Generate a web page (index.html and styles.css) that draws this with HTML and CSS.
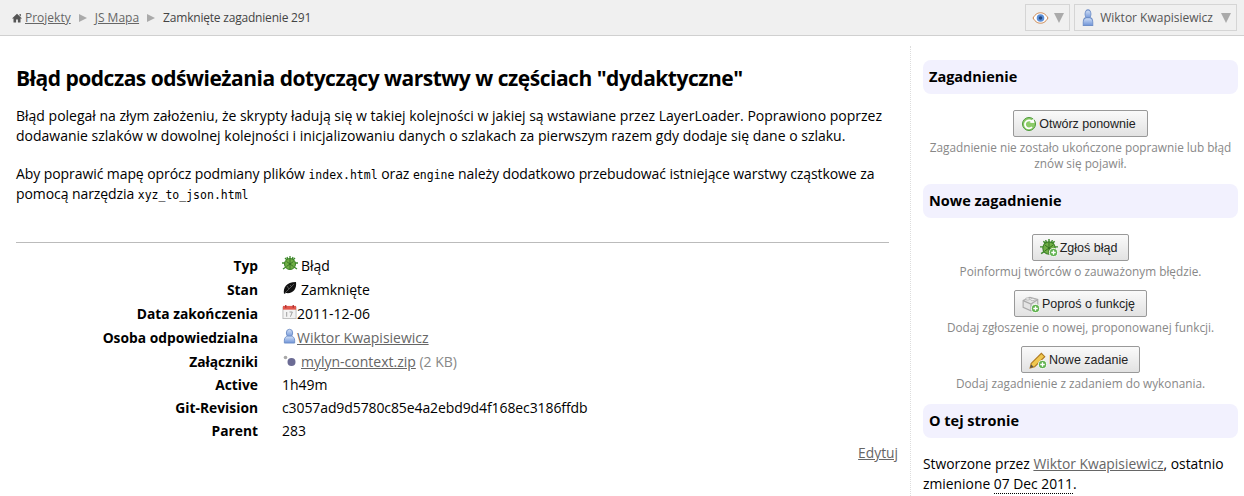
FILE: index.html
```html
<!DOCTYPE html>
<html lang="pl">
<head>
  <meta charset="UTF-8" />
  <title>Zamknięte zagadnienie 291</title>
  <link rel="stylesheet" href="styles.css">
</head>
<body>

  <svg class="defs" width="0" height="0" aria-hidden="true">
    <defs>
      <linearGradient id="userFill" x1="0" y1="0" x2="0" y2="1">
        <stop offset="0" stop-color="#d5e3f8"/>
        <stop offset="1" stop-color="#6f94d8"/>
      </linearGradient>
      <g id="userIcon">
        <ellipse cx="8" cy="4.800" rx="3.400" ry="4" fill="url(#userFill)" stroke="#6f8fc8"/>
        <path d="M2.500 15.500v-3c0-2.800 2-4.200 3.500-4.400h4c1.500.2 3.500 1.600 3.500 4.400v3z" fill="url(#userFill)" stroke="#6f8fc8"/>
      </g>
      <g id="bugIcon">
        <path d="M3 2l3 3M13 2l-3 3M0 7h3M16 7h-3M1 13l3-2M15 13l-3-2M8 0v3M5 1l1 3M11 1l-1 3" stroke="#3d8a2c" stroke-width="1.300" fill="none"/>
        <ellipse cx="8" cy="8" rx="5.500" ry="5.500" fill="#6fae45" stroke="#3c7f28"/>
        <path d="M4.500 5.500l7 5M11.500 5.500l-7 5M8 3v10" stroke="#2f6b20" stroke-width=".8"/>
      </g>
      <g id="plusBadge">
        <circle cx="12" cy="12" r="3.600" fill="#5cb04a" stroke="#fff" stroke-width=".8"/>
        <path d="M10 12h4M12 10v4" stroke="#fff" stroke-width="1.200"/>
      </g>
    </defs>
  </svg>

  <header class="topbar">
    <nav class="crumbs">
      <svg class="home-icon" width="10" height="10" viewBox="0 0 10 10"><path d="M5 .8L0 5.400h1.500V9.500h2.600V6.500h1.800v3h2.600V5.400H10z" fill="#555"/><path d="M7.500 1h1.300v2.500L7.500 2.500z" fill="#555"/></svg>
      <a href="#">Projekty</a>
      <span class="arrow"></span>
      <a href="#">JS Mapa</a>
      <span class="arrow"></span>
      <span class="current">Zamknięte zagadnienie 291</span>
    </nav>
    <div class="top-menus">
      <div class="top-menu">
        <svg width="17" height="12" viewBox="0 0 16 12"><path d="M.5 6C3 1.800 5.500.8 8 .8S13 1.800 15.500 6C13 10.200 10.500 11.200 8 11.200S3 10.200.5 6z" fill="#fff" stroke="#c9824a"/><circle cx="8" cy="6" r="3.800" fill="#5b8fd8"/><circle cx="8" cy="6" r="1.800" fill="#27487e"/></svg>
        <span class="caret"></span>
      </div>
      <div class="top-menu">
        <svg width="14" height="17" viewBox="0 0 16 16" preserveAspectRatio="none"><use href="#userIcon"/></svg>
        <span class="user-name">Wiktor Kwapisiewicz</span>
        <span class="caret"></span>
      </div>
    </div>
  </header>

  <div class="layout">
    <main class="content">
      <h1>Błąd podczas odświeżania dotyczący warstwy w częściach "dydaktyczne"</h1>
      <p>Błąd polegał na złym założeniu, że skrypty ładują się w takiej kolejności w jakiej są wstawiane przez LayerLoader. Poprawiono poprzez dodawanie szlaków w dowolnej kolejności i inicjalizowaniu danych o szlakach za pierwszym razem gdy dodaje się dane o szlaku.</p>
      <p class="tight">Aby poprawić mapę oprócz podmiany plików <code>index.html</code> oraz <code>engine</code> należy dodatkowo przebudować istniejące warstwy cząstkowe za pomocą narzędzia <code>xyz_to_json.html</code></p>
      <hr>
      <table class="props">
        <tr class="icon-row">
          <th>Typ</th>
          <td><svg class="ico gap" width="16" height="16" viewBox="0 0 16 16"><use href="#bugIcon"/></svg>Błąd</td>
        </tr>
        <tr class="icon-row">
          <th>Stan</th>
          <td><svg class="ico gap" width="16" height="16" viewBox="0 0 16 16"><path d="M2 14C1 8 4 2 14 2c1 7-3 12-10 11z" fill="#111"/><path d="M2 14L12 4M5 6l2 3M8 5l2 2" stroke="#666" stroke-width=".8"/></svg>Zamknięte</td>
        </tr>
        <tr class="icon-row">
          <th>Data zakończenia</th>
          <td><svg class="ico" width="15" height="16" viewBox="0 0 16 16"><rect x="1" y="3" width="14" height="12" fill="#f3f3f3" stroke="#bbb"/><rect x="1" y="1.500" width="14" height="4" fill="#e2574c"/><path d="M4 .5v3M12 .5v3" stroke="#a33" stroke-width="1.400"/><path d="M5 8v5M8 8h3l-2 5" stroke="#999" fill="none"/></svg>2011-12-06</td>
        </tr>
        <tr class="icon-row">
          <th>Osoba odpowiedzialna</th>
          <td><svg class="ico" width="15" height="16" viewBox="0 0 16 16"><use href="#userIcon"/></svg><a href="#">Wiktor Kwapisiewicz</a></td>
        </tr>
        <tr class="icon-row">
          <th>Załączniki</th>
          <td><svg class="ico gap" width="16" height="16" viewBox="0 0 16 16"><circle cx="9.500" cy="10" r="4" fill="#6b6b94"/><circle cx="3.500" cy="5.500" r="1.800" fill="#a8a8a8"/></svg><a href="#">mylyn-context.zip</a> <span class="muted">(2 KB)</span></td>
        </tr>
        <tr><th>Active</th><td>1h49m</td></tr>
        <tr><th>Git-Revision</th><td class="rev">c3057ad9d5780c85e4a2ebd9d4f168ec3186ffdb</td></tr>
        <tr><th>Parent</th><td>283</td></tr>
      </table>
      <div class="edit-line"><a href="#">Edytuj</a></div>
    </main>

    <aside class="sidebar">
      <h2>Zagadnienie</h2>
      <div class="action">
        <button type="button">
          <svg width="16" height="16" viewBox="0 0 16 16"><circle cx="8" cy="8" r="6.500" fill="#8ccb68" stroke="#4c9a3a"/><path d="M11.500 6.500A4 4 0 1 0 11 11" fill="none" stroke="#fff" stroke-width="1.800"/><path d="M8.500 6.500l5 .5-1-4.500z" fill="#fff"/></svg>
          Otwórz ponownie
        </button>
        <small>Zagadnienie nie zostało ukończone poprawnie lub błąd znów się pojawił.</small>
      </div>

      <h2>Nowe zagadnienie</h2>
      <div class="action">
        <button type="button">
          <svg width="18" height="18" viewBox="0 0 16 16"><use href="#bugIcon"/><use href="#plusBadge"/></svg>
          Zgłoś błąd
        </button>
        <small>Poinformuj twórców o zauważonym błędzie.</small>
      </div>
      <div class="action">
        <button type="button">
          <svg width="18" height="18" viewBox="0 0 16 16"><path d="M1 5l6-3 7 2v6l-6 4-7-3z" fill="#e4e4e4" stroke="#aaa"/><path d="M1 5l7 3 6-4M8 8v6" fill="none" stroke="#aaa"/><ellipse cx="5" cy="3.500" rx="2" ry="1" fill="#eee" stroke="#aaa" stroke-width=".6"/><ellipse cx="9.500" cy="4" rx="2" ry="1" fill="#eee" stroke="#aaa" stroke-width=".6"/><use href="#plusBadge"/></svg>
          Poproś o funkcję
        </button>
        <small>Dodaj zgłoszenie o nowej, proponowanej funkcji.</small>
      </div>
      <div class="action">
        <button type="button">
          <svg width="18" height="18" viewBox="0 0 16 16"><path d="M2 11L11 2l3 3-9 9-4 1z" fill="#f0c850" stroke="#b07a20"/><path d="M1 15l1-3 2 2z" fill="#555"/><use href="#plusBadge"/></svg>
          Nowe zadanie
        </button>
        <small>Dodaj zagadnienie z zadaniem do wykonania.</small>
      </div>

      <h2>O tej stronie</h2>
      <p class="about">Stworzone przez <a href="#">Wiktor Kwapisiewicz</a>, ostatnio zmienione <span class="date">07 Dec 2011</span>.</p>
    </aside>
  </div>

</body>
</html>
```

FILE: styles.css
```css
body {
  font-family: "Open Sans", "Noto Sans", sans-serif;
  font-size: 14px;
  color: #000;
  background-color: #fff;
  margin: 0;
  height: 496px;
  overflow: hidden;
}

a {
  color: #666;
  text-decoration: underline;
}

.defs {
  display: block;
  height: 0;
}

.topbar {
  display: flex;
  justify-content: space-between;
  align-items: center;
  height: 36px;
  box-sizing: border-box;
  background-color: #f0f0f0;
  border-bottom: 1px solid #d0d0d0;
  padding: 0 7px 0 12px;
  font-size: 12px;
  color: #444;
}

.crumbs {
  display: flex;
  align-items: center;
  gap: 8px;
}

.crumbs .home-icon {
  margin-right: -5px;
}

.crumbs .arrow {
  width: 0;
  height: 0;
  border-left: 8px solid #aaa;
  border-top: 4px solid transparent;
  border-bottom: 4px solid transparent;
}

.crumbs .current {
  letter-spacing: -.2px;
}

.top-menus {
  display: flex;
  gap: 4px;
}

.top-menu {
  display: flex;
  align-items: center;
  gap: 5px;
  height: 27px;
  box-sizing: border-box;
  padding: 0 5px 0 6px;
  border: 1px solid #d5d5d5;
  color: #555;
}

.user-name {
  margin-right: 3px;
}

.caret {
  width: 0;
  height: 0;
  border-top: 10px solid #aaa;
  border-left: 5px solid transparent;
  border-right: 5px solid transparent;
}

.layout {
  display: flex;
  height: 460px;
}

.content {
  width: 873px;
  padding: 0 21px 0 16px;
  flex-shrink: 0;
}

h1 {
  font-size: 21px;
  line-height: 28px;
  letter-spacing: -.49px;
  font-weight: 700;
  margin: 28px 0 14px;
}

.content p {
  line-height: 20px;
  margin: 0 0 18px;
}

.content p.tight {
  letter-spacing: -.08px;
}

code {
  font-family: "DejaVu Sans Mono", monospace;
  font-size: 11.500px;
  line-height: 1;
  letter-spacing: 0;
}

hr {
  border: 0;
  border-top: 1px solid #bbb;
  margin: 38px 0 10px;
}

.props {
  border-collapse: collapse;
}

.props th {
  width: 242px;
  padding: 0 24px 0 0;
  text-align: right;
  font-size: 13.800px;
  font-weight: 700;
  height: 23px;
}

.props td {
  padding: 0;
  height: 23px;
}

.props .icon-row th,
.props .icon-row td {
  height: 24px;
}

.props .rev {
  letter-spacing: -.1px;
}

.ico {
  vertical-align: -1px;
}

.ico.gap {
  margin-right: 3px;
}

.muted {
  color: #888;
}

.edit-line {
  text-align: right;
  font-size: 13.800px;
  margin: 1px -9px 0 0;
}

.sidebar {
  width: 315px;
  margin-top: 10px;
  padding: 14px 0 0 12px;
  border-left: 1px dotted #ddd;
}

h2 {
  font-size: 14.500px;
  line-height: 34px;
  font-weight: 700;
  background-color: #f2f1fe;
  border-radius: 8px;
  padding: 0 6px;
  margin: 0 0 16px;
}

.action {
  text-align: center;
  margin-bottom: 11px;
}

.action + h2 {
  margin-top: 13px;
}

.action button {
  display: inline-flex;
  align-items: center;
  gap: 2px;
  height: 27px;
  padding: 0 11px 0 7px;
  font-family: "Liberation Sans", sans-serif;
  font-size: 12.500px;
  color: #222;
  background: linear-gradient(#fafafa, #e2e2e2);
  border: 1px solid #999;
  border-radius: 2px;
}

.action small {
  display: block;
  font-size: 11.800px;
  line-height: 16px;
  color: #888;
  margin-top: 2px;
  padding: 0 6px;
}

.about {
  margin: 0;
  font-size: 13.850px;
  line-height: 20px;
}

.date {
  border-bottom: 1px dotted #000;
}
```
